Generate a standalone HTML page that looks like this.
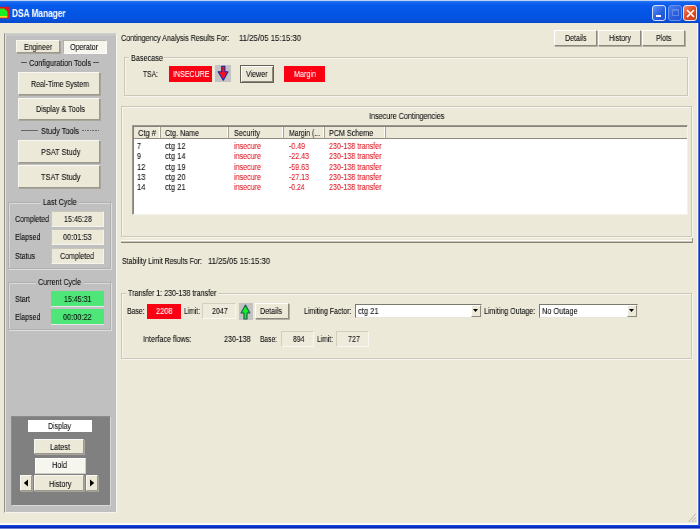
<!DOCTYPE html>
<html>
<head>
<meta charset="utf-8">
<title>DSA Manager</title>
<style>
*{box-sizing:border-box;margin:0;padding:0}
html,body{width:700px;height:529px;overflow:hidden;background:#ECE9D8}
body{font-family:"Liberation Sans",sans-serif;font-size:9px;color:#000;position:relative}
.a{position:absolute}
.t{position:absolute;white-space:pre;font-size:9px;line-height:12px;transform-origin:0 0;color:#0c0c0c;will-change:transform;-webkit-text-stroke:.08px currentColor}
#title{left:0;top:0;width:700px;height:23px;background:linear-gradient(#4a92f5 0,#1566ee 10%,#0659ea 24%,#0355e6 55%,#0553e0 80%,#0a49cb 100%)}
.btn{position:absolute;background:#ECE9D8;border:1px solid;border-color:#fff #8d8a7c #8d8a7c #fff;box-shadow:1px 1px 0 #b4b1a3}
.sb{position:absolute;background:#ECE9D8;border:1px solid;border-color:#f8f7f1 #9c998c #9c998c #f8f7f1;box-shadow:1px 1px 0 #a8a69c}
.pr{position:absolute;background:#f6f5ee;border:1px solid;border-color:#b4b2a6 #fbfaf6 #fbfaf6 #b4b2a6}
.fld{position:absolute;background:#ECE9D8;border:1px solid;border-color:#c8c6b8 #f4f3ec #f4f3ec #c8c6b8}
.fl2{position:absolute;background:#EEEBDC;border:1px solid;border-color:#d2cfbf #f8f7f0 #f8f7f0 #d2cfbf}
.grp{position:absolute;border:1px solid #cbc8b8;box-shadow:inset 1px 1px 0 #f6f5ee,1px 1px 0 #f6f5ee}
.sgrp{position:absolute;border:1px solid #b0b0b0;box-shadow:inset 1px 1px 0 #dadada,1px 1px 0 #dedede}
.lbg{position:absolute;height:12px}
.hc{position:absolute;top:126px;height:13px;background:#ECE9D8;border-right:1px solid #a5a294;border-bottom:1px solid #8f8c7e;box-shadow:inset -1px 0 0 #fff}
#w{left:0;top:0;width:700px;height:529px;filter:blur(.45px)}
#title>*{filter:blur(.4px)}

</style>
</head>
<body>
<!-- title bar -->
<div id="title" class="a">
  <div class="a" style="left:0;top:0;width:700px;height:1px;background:#b9d0f7;filter:none"></div>
  <svg class="a" style="left:0;top:6px" width="10" height="13" viewBox="0 0 10 13"><rect x="0" y="0.8" width="9.5" height="11.7" fill="#e8141c"/><path d="M0 2.5 H4.2 L7.5 5.5 V10.6 H0 Z" fill="#1cee24"/><rect x="0" y="10.1" width="7.3" height="1.5" fill="#f0ec20"/></svg>
  <span class="t" style="left:11.8px;top:7.4px;transform:scaleX(0.829);color:#f6f8ff;font-weight:bold;font-size:10px;line-height:13px">DSA Manager</span>
  <!-- window buttons -->
  <div class="a" style="left:651.5px;top:5px;width:14.5px;height:15.5px;border:1px solid #d4e0fa;border-radius:3px;background:linear-gradient(135deg,#5c93f6,#2a5fe0 55%,#1f4fd0)"><div class="a" style="left:3px;top:9px;width:5px;height:2px;background:#fff"></div></div>
  <div class="a" style="left:667.5px;top:5px;width:14.5px;height:15.5px;border:1px solid #6a90ec;border-radius:3px;background:linear-gradient(135deg,#467ef0,#2a5fe0 55%,#2353d4)"><div class="a" style="left:3px;top:3px;width:7px;height:7px;border:1px solid #5f86e6;border-top-width:2px"></div></div>
  <div class="a" style="left:683.3px;top:5px;width:14.2px;height:15.5px;border:1px solid #f4e4dc;border-radius:3px;background:linear-gradient(135deg,#ee8868,#e0502a 45%,#cc3a18)"><svg class="a" style="left:2px;top:2.5px" width="9" height="9" viewBox="0 0 9 9"><path d="M1 1 L8 8 M8 1 L1 8" stroke="#fff" stroke-width="1.7"/></svg></div>
</div>
<!-- window borders -->
<div class="a" style="left:0;top:523px;width:699px;height:2px;background:#fbfaf5"></div>
<div class="a" style="left:697px;top:23px;width:1px;height:502px;background:#fbfaf5"></div>
<div class="a" style="left:698px;top:23px;width:2px;height:506px;background:linear-gradient(90deg,#7f9cea 0,#2347c4 50%,#10279c 100%)"></div>
<div class="a" style="left:0;top:525px;width:700px;height:3px;background:linear-gradient(#1f55e4 0,#0a30c8 50%,#0a26b4 100%)"></div>
<div class="a" style="left:0;top:528px;width:700px;height:1px;background:#6f80d4"></div>
<!-- resize grip -->
<svg class="a" style="left:688px;top:513px;filter:blur(.4px)" width="9" height="10" viewBox="0 0 9 10"><path d="M8 1 L1 9 M8 4.5 L4 9 M8 7.5 L6.8 9" stroke="#c2bead" stroke-width="1.2"/><path d="M8 2 L2 9 M8 5.5 L5 9" stroke="#fbfaf5" stroke-width=".8"/></svg>

<div id="w" class="a">
<!-- ============ SIDEBAR ============ -->
<div class="a" style="left:4px;top:33px;width:113px;height:480px;background:#c0c0c0;border:1px solid;border-color:#cfcfcc #f6f4ec #f6f4ec #8f8d85;box-shadow:inset 1px 0 0 #e4e4e4,inset 0 2px 0 #c8c8c8"></div>
<div class="sb" style="left:16px;top:40px;width:44px;height:13px"></div>
<div class="pr" style="left:63px;top:40px;width:44px;height:14px"></div>
<div class="a" style="left:21px;top:62px;width:6px;height:1px;background:#555"></div>
<div class="a" style="left:93px;top:62px;width:6px;height:1px;background:#555"></div>
<div class="sb" style="left:18px;top:72px;width:82px;height:23px"></div>
<div class="sb" style="left:18px;top:98px;width:82px;height:22px"></div>
<div class="a" style="left:21px;top:130px;width:17px;height:1px;background:#666"></div>
<div class="a" style="left:82px;top:130px;width:18px;height:1px;background:repeating-linear-gradient(90deg,#666 0,#666 1.7px,transparent 1.7px,transparent 2.6px)"></div>
<div class="sb" style="left:18px;top:140px;width:82px;height:23px"></div>
<div class="sb" style="left:18px;top:165px;width:82px;height:23px"></div>
<!-- last cycle -->
<div class="sgrp" style="left:8px;top:202px;width:103px;height:67px"></div>
<div class="lbg" style="left:41px;top:196px;width:38px;background:#c0c0c0"></div>
<div class="fld" style="left:51px;top:211px;width:53px;height:16px"></div>
<div class="fld" style="left:51px;top:229px;width:53px;height:16px"></div>
<div class="fld" style="left:51px;top:248px;width:53px;height:16px"></div>
<!-- current cycle -->
<div class="sgrp" style="left:8px;top:281.5px;width:103px;height:48.5px"></div>
<div class="lbg" style="left:36px;top:276px;width:48px;background:#c0c0c0"></div>
<div class="a" style="left:51px;top:291px;width:53px;height:16px;background:#4ee678;border-bottom:1px solid #e8e8e8"></div>
<div class="a" style="left:51px;top:309px;width:53px;height:16px;background:#4ee678;border-bottom:1px solid #e8e8e8"></div>
<!-- display panel -->
<div class="a" style="left:10.5px;top:416px;width:100px;height:90px;background:#808080;border:1px solid;border-color:#8c8c8c #d8d8d8 #d8d8d8 #8c8c8c"></div>
<div class="a" style="left:28px;top:420px;width:64px;height:12px;background:#fff"></div>
<div class="sb" style="left:34px;top:439px;width:50px;height:15px"></div>
<div class="pr" style="left:35px;top:458px;width:51px;height:16px;border-color:#fff #d0cfc6 #d0cfc6 #fff"></div>
<div class="sb" style="left:20px;top:475px;width:12px;height:16px"></div>
<div class="sb" style="left:34px;top:475px;width:50px;height:16px"></div>
<div class="sb" style="left:86px;top:475px;width:12px;height:16px"></div>
<svg class="a" style="left:23px;top:479px" width="6" height="8" viewBox="0 0 6 8"><path d="M5 0.5 V7.5 L0.8 4 Z" fill="#000"/></svg>
<svg class="a" style="left:89px;top:479px" width="6" height="8" viewBox="0 0 6 8"><path d="M1 0.5 V7.5 L5.2 4 Z" fill="#000"/></svg>

<!-- ============ MAIN ============ -->
<div class="btn" style="left:554px;top:30px;width:43px;height:16px"></div>
<div class="btn" style="left:598px;top:30px;width:43px;height:16px"></div>
<div class="btn" style="left:642px;top:30px;width:43px;height:16px"></div>
<!-- basecase -->
<div class="grp" style="left:124px;top:57px;width:564px;height:39px"></div>
<div class="lbg" style="left:129px;top:51px;width:35px;background:#ECE9D8"></div>
<div class="a" style="left:169px;top:66px;width:43px;height:16px;background:#fb0012"></div>
<div class="a" style="left:215px;top:65px;width:16px;height:17px;background:#c3c3c3"></div>
<svg class="a" style="left:217px;top:65px" width="12" height="17" viewBox="0 0 12 17"><path d="M4.7 1.2 H7.9 V6.7 H11 L6.3 15.2 L1.2 6.7 H4.7 Z" fill="#f4101c" stroke="#2222a8" stroke-width="1.1" stroke-linejoin="round"/></svg>
<div class="a" style="left:239.5px;top:65px;width:34.5px;height:18px;background:#ECE9D8;border:1px solid #646258;box-shadow:inset 1px 1px 0 #fff,inset -1px -1px 0 #8d8a7c"></div>
<div class="a" style="left:284px;top:66px;width:41px;height:16px;background:#fb0012"></div>
<!-- contingency group -->
<div class="grp" style="left:121px;top:106px;width:571px;height:131px"></div>
<div class="a" style="left:132px;top:125px;width:556px;height:90px;background:#fff;border:1px solid;border-color:#9a988b #f4f2ea #f4f2ea #9a988b;box-shadow:inset 1px 1px 0 #86847a"></div>
<div class="a" style="left:134px;top:127px;width:553px;height:12px;background:#ECE9D8;border-bottom:1px solid #8f8c7e"></div>
<div class="hc" style="top:127px;height:12px;left:134px;width:27px"></div>
<div class="hc" style="top:127px;height:12px;left:161px;width:68px"></div>
<div class="hc" style="top:127px;height:12px;left:229px;width:55px"></div>
<div class="hc" style="top:127px;height:12px;left:284px;width:41px"></div>
<div class="hc" style="top:127px;height:12px;left:325px;width:61px"></div>
<!-- splitter -->
<div class="a" style="left:121px;top:240px;width:572px;height:1px;background:#fbfaf5"></div>
<div class="a" style="left:121px;top:241px;width:572px;height:1px;background:#c9c6b7"></div>
<div class="a" style="left:121px;top:242px;width:572px;height:1px;background:#827f73"></div>
<div class="a" style="left:692px;top:238px;width:1px;height:5px;background:#96938a"></div>
<!-- transfer group -->
<div class="grp" style="left:121px;top:293px;width:571px;height:66px"></div>
<div class="lbg" style="left:126px;top:287px;width:92px;background:#ECE9D8"></div>
<div class="a" style="left:147px;top:303.5px;width:34px;height:15.5px;background:#fb0012"></div>
<div class="fl2" style="left:202px;top:303px;width:34px;height:16px"></div>
<div class="a" style="left:238.5px;top:303px;width:14.5px;height:16.5px;background:#c3c3c3"></div>
<svg class="a" style="left:239px;top:303.5px" width="13" height="17" viewBox="0 0 13 17"><path d="M5 15 H8 V9 H10.8 L6.5 1 L2 9 H5 Z" fill="#14f024" stroke="#1a5a50" stroke-width="1.1" stroke-linejoin="round"/></svg>
<div class="btn" style="left:254.5px;top:302.5px;width:34px;height:16.5px"></div>
<!-- combos -->
<div class="a" style="left:355px;top:303.5px;width:127px;height:14px;background:#fff;border:1px solid;border-color:#7c7a70 #e8e6dc #e8e6dc #7c7a70"></div>
<div class="a" style="left:470.5px;top:304.5px;width:10.5px;height:12.5px;background:#ECE9D8;border:1px solid;border-color:#fff #8d8a7c #8d8a7c #fff"></div>
<svg class="a" style="left:473.3px;top:309.3px" width="5" height="3" viewBox="0 0 5 3"><path d="M0 0 H5 L2.5 3 Z" fill="#000"/></svg>
<div class="a" style="left:539px;top:303.5px;width:99px;height:14px;background:#fff;border:1px solid;border-color:#7c7a70 #e8e6dc #e8e6dc #7c7a70"></div>
<div class="a" style="left:626.5px;top:304.5px;width:10.5px;height:12.5px;background:#ECE9D8;border:1px solid;border-color:#fff #8d8a7c #8d8a7c #fff"></div>
<svg class="a" style="left:629.3px;top:309.3px" width="5" height="3" viewBox="0 0 5 3"><path d="M0 0 H5 L2.5 3 Z" fill="#000"/></svg>
<div class="fl2" style="left:280.5px;top:330.5px;width:33.5px;height:16px"></div>
<div class="fl2" style="left:335.5px;top:330.5px;width:33px;height:16px"></div>

<!-- text -->
<span class="t" style="left:24.0px;top:40.9px;transform:scaleX(0.783)">Engineer</span>
<span class="t" style="left:70.4px;top:40.9px;transform:scaleX(0.788)">Operator</span>
<span class="t" style="left:29.0px;top:56.6px;transform:scaleX(0.806)">Configuration Tools</span>
<span class="t" style="left:31.0px;top:78.0px;transform:scaleX(0.787)">Real-Time System</span>
<span class="t" style="left:36.0px;top:103.0px;transform:scaleX(0.798)">Display &amp; Tools</span>
<span class="t" style="left:41.0px;top:124.6px;transform:scaleX(0.819)">Study Tools</span>
<span class="t" style="left:40.6px;top:145.6px;transform:scaleX(0.817)">PSAT Study</span>
<span class="t" style="left:40.6px;top:170.6px;transform:scaleX(0.826)">TSAT Study</span>
<span class="t" style="left:43.0px;top:196.0px;transform:scaleX(0.799)">Last Cycle</span>
<span class="t" style="left:14.6px;top:213.0px;transform:scaleX(0.781)">Completed</span>
<span class="t" style="left:63.6px;top:213.0px;transform:scaleX(0.799)">15:45:28</span>
<span class="t" style="left:14.6px;top:231.4px;transform:scaleX(0.781)">Elapsed</span>
<span class="t" style="left:63.0px;top:231.4px;transform:scaleX(0.816)">00:01:53</span>
<span class="t" style="left:14.6px;top:249.6px;transform:scaleX(0.784)">Status</span>
<span class="t" style="left:60.4px;top:249.6px;transform:scaleX(0.781)">Completed</span>
<span class="t" style="left:38.4px;top:276.2px;transform:scaleX(0.782)">Current Cycle</span>
<span class="t" style="left:14.6px;top:293.2px;transform:scaleX(0.789)">Start</span>
<span class="t" style="left:63.6px;top:293.2px;transform:scaleX(0.782)">15:45:31</span>
<span class="t" style="left:14.6px;top:311.4px;transform:scaleX(0.781)">Elapsed</span>
<span class="t" style="left:63.0px;top:311.4px;transform:scaleX(0.816)">00:00:22</span>
<span class="t" style="left:48.0px;top:420.2px;transform:scaleX(0.779)">Display</span>
<span class="t" style="left:50.0px;top:440.6px;transform:scaleX(0.815)">Latest</span>
<span class="t" style="left:52.0px;top:458.8px;transform:scaleX(0.810)">Hold</span>
<span class="t" style="left:48.6px;top:477.8px;transform:scaleX(0.800)">History</span>
<span class="t" style="left:121.0px;top:32.4px;transform:scaleX(0.792)">Contingency Analysis Results For:</span>
<span class="t" style="left:239.0px;top:32.4px;transform:scaleX(0.862)">11/25/05 15:15:30</span>
<span class="t" style="left:565.0px;top:32.4px;transform:scaleX(0.785)">Details</span>
<span class="t" style="left:609.0px;top:32.4px;transform:scaleX(0.785)">History</span>
<span class="t" style="left:655.6px;top:32.4px;transform:scaleX(0.769)">Plots</span>
<span class="t" style="left:130.6px;top:51.8px;transform:scaleX(0.809)">Basecase</span>
<span class="t" style="left:143.0px;top:68.2px;transform:scaleX(0.749)">TSA:</span>
<span class="t" style="left:172.6px;top:68.2px;transform:scaleX(0.783);color:#fff">INSECURE</span>
<span class="t" style="left:246.0px;top:68.2px;transform:scaleX(0.789)">Viewer</span>
<span class="t" style="left:294.0px;top:68.2px;transform:scaleX(0.800);color:#fff">Margin</span>
<span class="t" style="left:368.6px;top:110.4px;transform:scaleX(0.802)">Insecure Contingencies</span>
<span class="t" style="left:138.0px;top:126.8px;transform:scaleX(0.837)">Ctg #</span>
<span class="t" style="left:165.4px;top:126.8px;transform:scaleX(0.790)">Ctg. Name</span>
<span class="t" style="left:234.0px;top:126.8px;transform:scaleX(0.800)">Security</span>
<span class="t" style="left:289.0px;top:126.8px;transform:scaleX(0.765)">Margin (...</span>
<span class="t" style="left:329.4px;top:126.8px;transform:scaleX(0.796)">PCM Scheme</span>
<span class="t" style="left:137.0px;top:140.0px;transform:scaleX(0.798)">7</span>
<span class="t" style="left:165.4px;top:140.0px;transform:scaleX(0.840)">ctg 12</span>
<span class="t" style="left:234.0px;top:140.0px;transform:scaleX(0.793);color:#e01824">insecure</span>
<span class="t" style="left:289.0px;top:140.0px;transform:scaleX(0.780);color:#e01824">-0.49</span>
<span class="t" style="left:329.4px;top:140.0px;transform:scaleX(0.796);color:#e01824">230-138 transfer</span>
<span class="t" style="left:137.0px;top:150.4px;transform:scaleX(0.798)">9</span>
<span class="t" style="left:165.4px;top:150.4px;transform:scaleX(0.840)">ctg 14</span>
<span class="t" style="left:234.0px;top:150.4px;transform:scaleX(0.793);color:#e01824">insecure</span>
<span class="t" style="left:289.0px;top:150.4px;transform:scaleX(0.783);color:#e01824">-22.43</span>
<span class="t" style="left:329.4px;top:150.4px;transform:scaleX(0.796);color:#e01824">230-138 transfer</span>
<span class="t" style="left:137.0px;top:160.7px;transform:scaleX(0.839)">12</span>
<span class="t" style="left:165.4px;top:160.7px;transform:scaleX(0.840)">ctg 19</span>
<span class="t" style="left:234.0px;top:160.7px;transform:scaleX(0.793);color:#e01824">insecure</span>
<span class="t" style="left:289.0px;top:160.7px;transform:scaleX(0.783);color:#e01824">-59.63</span>
<span class="t" style="left:329.4px;top:160.7px;transform:scaleX(0.796);color:#e01824">230-138 transfer</span>
<span class="t" style="left:137.0px;top:171.0px;transform:scaleX(0.839)">13</span>
<span class="t" style="left:165.4px;top:171.0px;transform:scaleX(0.840)">ctg 20</span>
<span class="t" style="left:234.0px;top:171.0px;transform:scaleX(0.793);color:#e01824">insecure</span>
<span class="t" style="left:289.0px;top:171.0px;transform:scaleX(0.783);color:#e01824">-27.13</span>
<span class="t" style="left:329.4px;top:171.0px;transform:scaleX(0.796);color:#e01824">230-138 transfer</span>
<span class="t" style="left:137.0px;top:181.4px;transform:scaleX(0.839)">14</span>
<span class="t" style="left:165.4px;top:181.4px;transform:scaleX(0.840)">ctg 21</span>
<span class="t" style="left:234.0px;top:181.4px;transform:scaleX(0.793);color:#e01824">insecure</span>
<span class="t" style="left:289.0px;top:181.4px;transform:scaleX(0.760);color:#e01824">-0.24</span>
<span class="t" style="left:329.4px;top:181.4px;transform:scaleX(0.796);color:#e01824">230-138 transfer</span>
<span class="t" style="left:122.0px;top:254.6px;transform:scaleX(0.769)">Stability Limit Results For:</span>
<span class="t" style="left:208.0px;top:254.6px;transform:scaleX(0.862)">11/25/05 15:15:30</span>
<span class="t" style="left:128.0px;top:287.4px;transform:scaleX(0.791)">Transfer 1: 230-138 transfer</span>
<span class="t" style="left:127.4px;top:305.4px;transform:scaleX(0.765)">Base:</span>
<span class="t" style="left:156.0px;top:305.4px;transform:scaleX(0.819);color:#fff">2208</span>
<span class="t" style="left:184.0px;top:305.4px;transform:scaleX(0.744)">Limit:</span>
<span class="t" style="left:211.6px;top:305.4px;transform:scaleX(0.789)">2047</span>
<span class="t" style="left:260.4px;top:305.0px;transform:scaleX(0.800)">Details</span>
<span class="t" style="left:304.0px;top:305.0px;transform:scaleX(0.770)">Limiting Factor:</span>
<span class="t" style="left:357.6px;top:305.0px;transform:scaleX(0.840)">ctg 21</span>
<span class="t" style="left:484.4px;top:305.0px;transform:scaleX(0.781)">Limiting Outage:</span>
<span class="t" style="left:542.0px;top:305.0px;transform:scaleX(0.818)">No Outage</span>
<span class="t" style="left:142.6px;top:333.2px;transform:scaleX(0.800)">Interface flows:</span>
<span class="t" style="left:224.4px;top:333.2px;transform:scaleX(0.805)">230-138</span>
<span class="t" style="left:260.0px;top:333.2px;transform:scaleX(0.739)">Base:</span>
<span class="t" style="left:293.0px;top:333.2px;transform:scaleX(0.758)">894</span>
<span class="t" style="left:317.0px;top:333.2px;transform:scaleX(0.744)">Limit:</span>
<span class="t" style="left:348.0px;top:333.2px;transform:scaleX(0.798)">727</span>
</div>
</body>
</html>
